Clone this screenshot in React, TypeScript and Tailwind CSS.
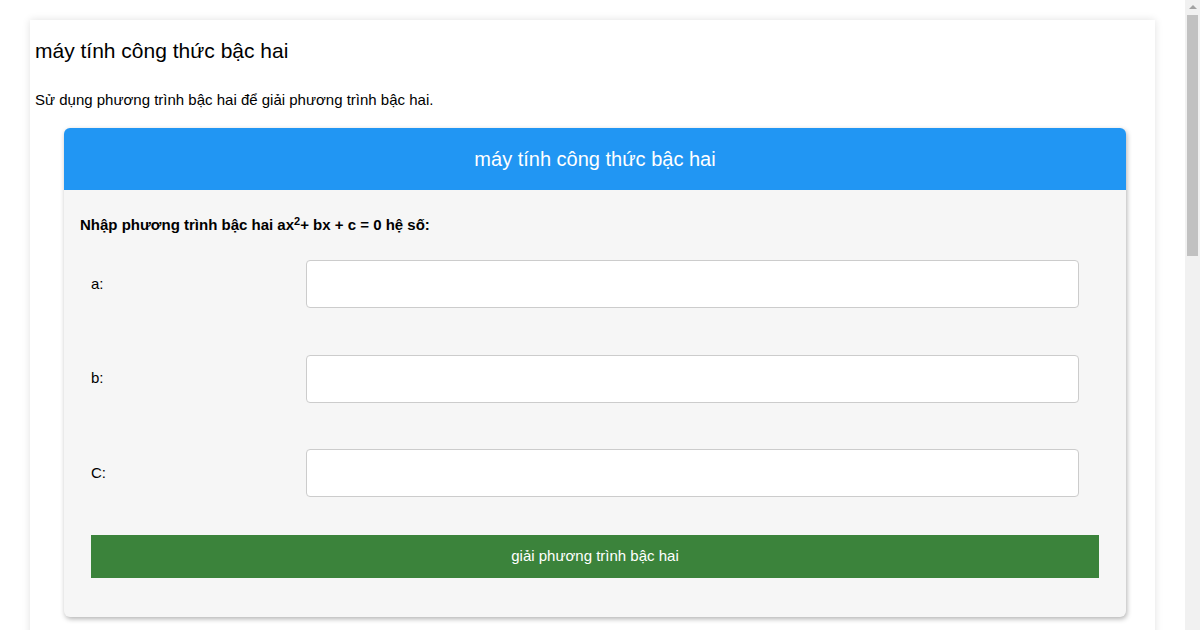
export default function App() {
  const fields = ['a', 'b', 'C'];
  return (
    <div className="min-h-[1570px] bg-white pt-[20px] font-['Liberation_Sans',Arial,sans-serif] text-black">
      <div className="mx-[30px] w-[1125px] min-h-[1530px] bg-white px-[5px] shadow-[0_0_8px_rgba(0,0,0,0.12)]">
        {/* Page heading */}
        <h1 className="pt-[17px] text-[21px] leading-[28px]">máy tính công thức bậc hai</h1>
        <p className="mt-[26px] text-[15px] leading-[18px]">
          Sử dụng phương trình bậc hai để giải phương trình bậc hai.
        </p>

        {/* Calculator card */}
        <div className="mt-[19px] ml-[29px] w-[1062px] overflow-hidden rounded-[6px] bg-[#f6f6f6] shadow-[1px_2px_5px_rgba(0,0,0,0.3)]">
          <div className="flex h-[62px] items-center justify-center bg-[#2196f3] text-[20px] text-white">
            máy tính công thức bậc hai
          </div>

          <div className="px-[16px] pt-[26px] pb-[39px]">
            <p className="text-[15px] font-bold leading-[18px]">
              Nhập phương trình bậc hai ax<sup className="text-[11px]">2</sup>+ bx + c = 0 hệ số:
            </p>

            <div className="mt-[26px] flex flex-col gap-[46.5px] px-[11px]">
              {fields.map((f) => (
                <div key={f} className="flex items-center">
                  <label className="w-[215px] text-[15px]">{f}:</label>
                  <input
                    type="text"
                    className="h-[48px] w-[773px] rounded-[4px] border border-[#cccccc] bg-white px-3 text-[15px] outline-none"
                  />
                </div>
              ))}
            </div>

            <div className="mt-[38px] px-[11px]">
              <button className="h-[43px] w-full bg-[#3b833b] text-[15px] text-white">
                giải phương trình bậc hai
              </button>
            </div>
          </div>
        </div>
      </div>

      {/* Scrollbar */}
      <div className="fixed top-0 right-0 flex h-[630px] w-[15px] flex-col items-center bg-[#f1f1f1]">
        <div className="mt-[5px] h-0 w-0 border-x-[4px] border-b-[4px] border-x-transparent border-b-[#a3a3a3]" />
        <div className="mt-[6px] h-[241px] w-[11px] bg-[#c1c1c1]" />
      </div>
    </div>
  );
}
